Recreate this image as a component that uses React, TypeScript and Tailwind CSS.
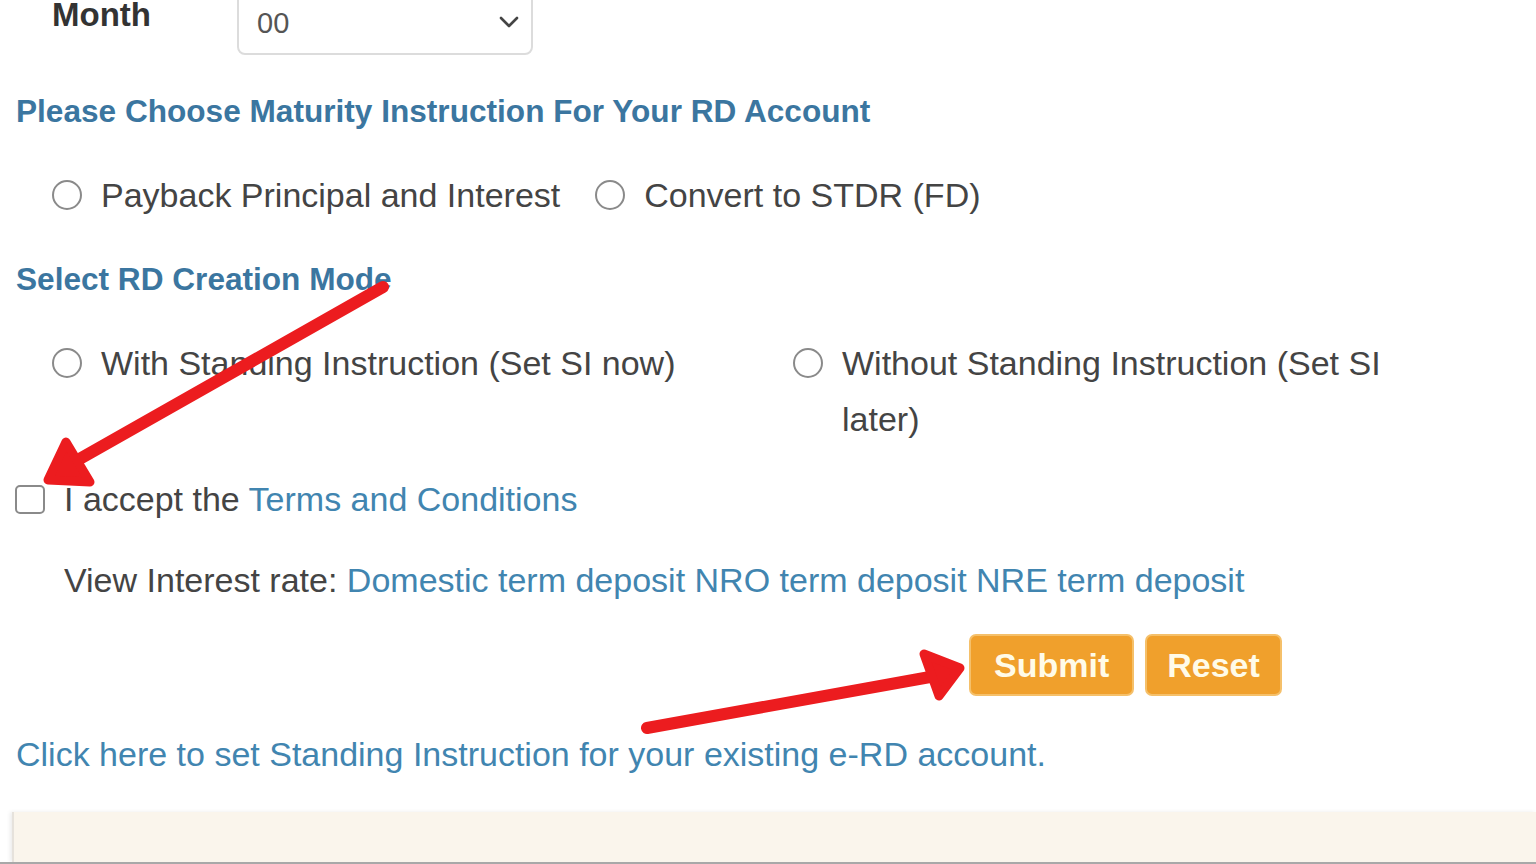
import React from "react";

const Radio = () => (
  <span className="block w-[30px] h-[30px] rounded-full border-2 border-[#8a8a8a] bg-white shrink-0" />
);

export default function App() {
  return (
    <div className="relative w-[1536px] h-[864px] overflow-hidden bg-white font-['Liberation_Sans',Arial,sans-serif] text-[#444]">
      {/* Month row */}
      <div className="flex items-start mt-[-15px] h-[70px]">
        <div className="pl-[52px] w-[237px] pt-[12px] text-[33px] leading-[36px] font-bold text-[#333]">Month</div>
        <div className="w-[296px] h-[70px] rounded-[8px] border-2 border-[#dcdcdc] bg-white flex items-end justify-between pl-[18px] pr-[10px] pb-[13px]">
          <span className="text-[29px] leading-[34px] text-[#555]">00</span>
          <svg width="24" height="24" viewBox="0 0 24 24" className="mb-[6px]">
            <path d="M4 8 L12 16 L20 8" fill="none" stroke="#444" strokeWidth="2.6" strokeLinecap="round" strokeLinejoin="round" />
          </svg>
        </div>
      </div>

      {/* Heading 1 */}
      <div className="mt-[36px] pl-[16px] text-[31.6px] leading-[40px] font-bold text-[#3b76a0]">
        Please Choose Maturity Instruction For Your RD Account
      </div>

      {/* Radio row 1 */}
      <div className="mt-[36px] pl-[52px] flex items-center h-[56px] text-[34px]">
        <Radio />
        <span className="ml-[19px]">Payback Principal and Interest</span>
        <div className="ml-[35px]"><Radio /></div>
        <span className="ml-[19px]">Convert to STDR (FD)</span>
      </div>

      {/* Heading 2 */}
      <div className="mt-[36px] pl-[16px] text-[31.6px] leading-[40px] font-bold text-[#3b76a0]">
        Select RD Creation Mode
      </div>

      {/* Radio row 2 */}
      <div className="mt-[36px] pl-[52px] flex items-start text-[34px] leading-[56px]">
        <div className="w-[741px] flex items-start">
          <div className="h-[56px] flex items-center"><Radio /></div>
          <span className="ml-[19px]">With Standing Instruction (Set SI now)</span>
        </div>
        <div className="flex items-start">
          <div className="h-[56px] flex items-center"><Radio /></div>
          <span className="ml-[19px] w-[560px]">Without Standing Instruction (Set SI later)</span>
        </div>
      </div>

      {/* Checkbox row */}
      <div className="mt-[24px] pl-[15px] flex items-center h-[56px] text-[34px]">
        <span className="block w-[30px] h-[29px] rounded-[5px] border-2 border-[#8a8a8a] bg-white" />
        <span className="ml-[19px]">
          I accept the <span className="text-[#4185b0]">Terms and Conditions</span>
        </span>
      </div>

      {/* View Interest rate */}
      <div className="mt-[25px] pl-[64px] h-[56px] flex items-center text-[34px]">
        <span>
          View Interest rate:{" "}
          <span className="text-[#4185b0]">Domestic term deposit NRO term deposit NRE term deposit</span>
        </span>
      </div>

      {/* Buttons */}
      <div className="mt-[26px] pl-[969px] flex gap-[11px]">
        <button className="h-[62px] px-[23px] rounded-[7px] bg-[#f0a02c] border-2 border-[#f5c06a] text-[34px] font-bold text-[#fffbe8]">
          Submit
        </button>
        <button className="h-[62px] px-[20px] rounded-[7px] bg-[#f0a02c] border-2 border-[#f5c06a] text-[34px] font-bold text-[#fffbe8]">
          Reset
        </button>
      </div>

      {/* Link */}
      <div className="mt-[30px] pl-[16px] h-[56px] flex items-center text-[34px] text-[#4185b0]">
        Click here to set Standing Instruction for your existing e-RD account.
      </div>

      {/* Bottom cream box */}
      <div className="mt-[30px] ml-[12px] h-[50px] bg-[#faf5ec] border-l-2 border-[#e6e2dc] shadow-[-2px_0_4px_rgba(0,0,0,0.08)]" />
      <div className="h-[4px] bg-[#a8a8a8]" />

      {/* Arrows overlay */}
      <svg className="absolute left-0 top-0 pointer-events-none" width="1536" height="864" viewBox="0 0 1536 864">
        <line x1="383" y1="287" x2="76" y2="461" stroke="#ec1c1f" strokeWidth="12" strokeLinecap="round" />
        <polygon points="66,442 48,480 90,482" fill="#ec1c1f" stroke="#ec1c1f" strokeWidth="9" strokeLinejoin="round" />
        <line x1="647" y1="728" x2="930" y2="677" stroke="#ec1c1f" strokeWidth="12" strokeLinecap="round" />
        <polygon points="924,654 960,668 939,696" fill="#ec1c1f" stroke="#ec1c1f" strokeWidth="9" strokeLinejoin="round" />
      </svg>
    </div>
  );
}
